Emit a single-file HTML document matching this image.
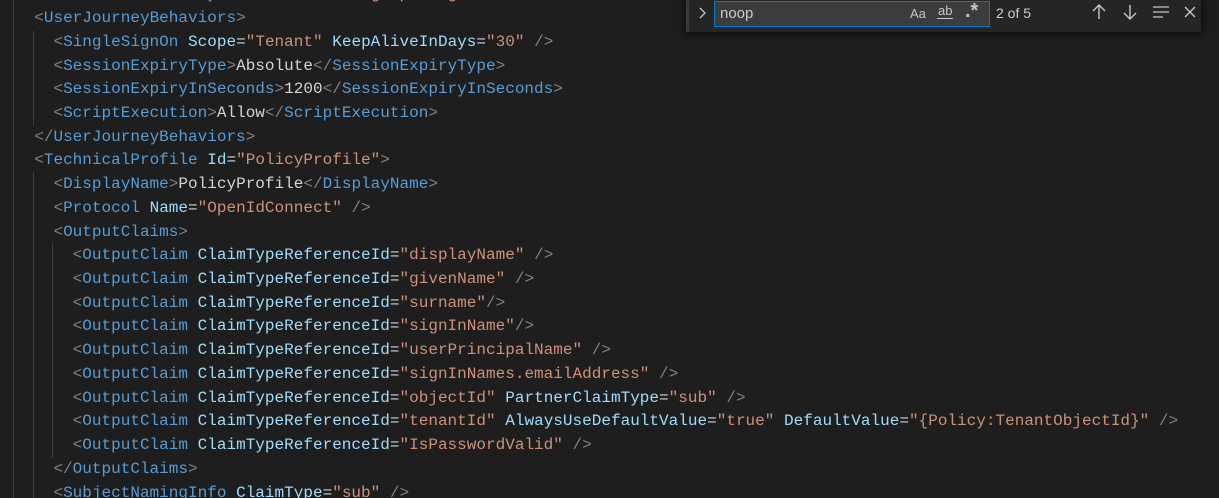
<!DOCTYPE html>
<html><head><meta charset="utf-8"><style>
html,body{margin:0;padding:0;background:#1e1e1e;width:1219px;height:498px;overflow:hidden;position:relative}
.code{position:absolute;left:15px;top:-16.6px;font-family:"Liberation Mono",monospace;font-size:16.03px;line-height:23.72px;white-space:pre;color:#d4d4d4}
.b{color:#808080}.t{color:#569cd6}.a{color:#9cdcfe}.s{color:#ce9178}
.g{position:absolute;width:1px;background:#404040}
.fw{position:absolute;left:686px;top:0;width:515px;height:32px;background:#252526;box-shadow:0 0 8px 2px rgba(0,0,0,.55);font-family:"Liberation Sans",sans-serif;color:#c5c5c5}
.fw .lb{position:absolute;left:0;top:0;width:3px;height:32px;background:#3a3a3a}
.inp{position:absolute;left:28px;top:1px;width:274px;height:24px;border:1px solid #007acc;background:#3c3c3c}
.ic{position:absolute;font-size:14px;top:6px}
</style></head><body>
<div class="g" style="left:13px;top:0;height:498px"></div>
<div class="g" style="left:33px;top:31px;height:94px"></div>
<div class="g" style="left:33px;top:172px;height:326px"></div>
<div class="g" style="left:52px;top:243px;height:215px"></div>
<div class="code"><span class="b">  &lt;</span><span class="t">DefaultUserJourney</span> <span class="a">ReferenceId</span>=<span class="s">"SignUpOrSignIn"</span> <span class="b">/&gt;</span>
<span class="b">  &lt;</span><span class="t">UserJourneyBehaviors</span><span class="b">&gt;</span>
<span class="b">    &lt;</span><span class="t">SingleSignOn</span> <span class="a">Scope</span>=<span class="s">"Tenant"</span> <span class="a">KeepAliveInDays</span>=<span class="s">"30"</span> <span class="b">/&gt;</span>
<span class="b">    &lt;</span><span class="t">SessionExpiryType</span><span class="b">&gt;</span>Absolute<span class="b">&lt;/</span><span class="t">SessionExpiryType</span><span class="b">&gt;</span>
<span class="b">    &lt;</span><span class="t">SessionExpiryInSeconds</span><span class="b">&gt;</span>1200<span class="b">&lt;/</span><span class="t">SessionExpiryInSeconds</span><span class="b">&gt;</span>
<span class="b">    &lt;</span><span class="t">ScriptExecution</span><span class="b">&gt;</span>Allow<span class="b">&lt;/</span><span class="t">ScriptExecution</span><span class="b">&gt;</span>
<span class="b">  &lt;/</span><span class="t">UserJourneyBehaviors</span><span class="b">&gt;</span>
<span class="b">  &lt;</span><span class="t">TechnicalProfile</span> <span class="a">Id</span>=<span class="s">"PolicyProfile"</span><span class="b">&gt;</span>
<span class="b">    &lt;</span><span class="t">DisplayName</span><span class="b">&gt;</span>PolicyProfile<span class="b">&lt;/</span><span class="t">DisplayName</span><span class="b">&gt;</span>
<span class="b">    &lt;</span><span class="t">Protocol</span> <span class="a">Name</span>=<span class="s">"OpenIdConnect"</span> <span class="b">/&gt;</span>
<span class="b">    &lt;</span><span class="t">OutputClaims</span><span class="b">&gt;</span>
<span class="b">      &lt;</span><span class="t">OutputClaim</span> <span class="a">ClaimTypeReferenceId</span>=<span class="s">"displayName"</span> <span class="b">/&gt;</span>
<span class="b">      &lt;</span><span class="t">OutputClaim</span> <span class="a">ClaimTypeReferenceId</span>=<span class="s">"givenName"</span> <span class="b">/&gt;</span>
<span class="b">      &lt;</span><span class="t">OutputClaim</span> <span class="a">ClaimTypeReferenceId</span>=<span class="s">"surname"</span><span class="b">/&gt;</span>
<span class="b">      &lt;</span><span class="t">OutputClaim</span> <span class="a">ClaimTypeReferenceId</span>=<span class="s">"signInName"</span><span class="b">/&gt;</span>
<span class="b">      &lt;</span><span class="t">OutputClaim</span> <span class="a">ClaimTypeReferenceId</span>=<span class="s">"userPrincipalName"</span> <span class="b">/&gt;</span>
<span class="b">      &lt;</span><span class="t">OutputClaim</span> <span class="a">ClaimTypeReferenceId</span>=<span class="s">"signInNames.emailAddress"</span> <span class="b">/&gt;</span>
<span class="b">      &lt;</span><span class="t">OutputClaim</span> <span class="a">ClaimTypeReferenceId</span>=<span class="s">"objectId"</span> <span class="a">PartnerClaimType</span>=<span class="s">"sub"</span> <span class="b">/&gt;</span>
<span class="b">      &lt;</span><span class="t">OutputClaim</span> <span class="a">ClaimTypeReferenceId</span>=<span class="s">"tenantId"</span> <span class="a">AlwaysUseDefaultValue</span>=<span class="s">"true"</span> <span class="a">DefaultValue</span>=<span class="s">"{Policy:TenantObjectId}"</span> <span class="b">/&gt;</span>
<span class="b">      &lt;</span><span class="t">OutputClaim</span> <span class="a">ClaimTypeReferenceId</span>=<span class="s">"IsPasswordValid"</span> <span class="b">/&gt;</span>
<span class="b">    &lt;/</span><span class="t">OutputClaims</span><span class="b">&gt;</span>
<span class="b">    &lt;</span><span class="t">SubjectNamingInfo</span> <span class="a">ClaimType</span>=<span class="s">"sub"</span> <span class="b">/&gt;</span></div>
<div class="fw">
  <div class="lb"></div>
  <svg style="position:absolute;left:11px;top:6px" width="12" height="14" viewBox="0 0 12 14"><path d="M3 2 L8 7 L3 12" fill="none" stroke="#c5c5c5" stroke-width="1.3"/></svg>
  <div class="inp"><span style="position:absolute;left:5px;top:3px;font-size:15px;color:#cccccc">noop</span>
    <span class="ic" style="left:195px;top:4px;font-size:13px">Aa</span>
    <span class="ic" style="left:222px;top:2px;font-size:13px;border-bottom:1px solid #c5c5c5;line-height:14px;padding:0 1px">ab</span>
    <span class="ic" style="left:250px;top:-2px;font-size:20px;font-weight:bold">.*</span>
  </div>
  <span style="position:absolute;left:310px;top:5px;font-size:14px;color:#cccccc">2 of 5</span>
  <svg style="position:absolute;left:405px;top:3px" width="16" height="18" viewBox="0 0 16 18"><path d="M8 16 V2 M2 8 L8 2 L14 8" fill="none" stroke="#c5c5c5" stroke-width="1.4"/></svg>
  <svg style="position:absolute;left:436px;top:3px" width="16" height="18" viewBox="0 0 16 18"><path d="M8 2 V16 M2 10 L8 16 L14 10" fill="none" stroke="#c5c5c5" stroke-width="1.4"/></svg>
  <svg style="position:absolute;left:466px;top:4px" width="18" height="16" viewBox="0 0 18 16"><path d="M1 3 H17 M1 8 H17 M1 13 H11" fill="none" stroke="#c5c5c5" stroke-width="1.3"/></svg>
  <svg style="position:absolute;left:497px;top:5px" width="14" height="14" viewBox="0 0 14 14"><path d="M2 2 L12 12 M12 2 L2 12" fill="none" stroke="#c5c5c5" stroke-width="1.4"/></svg>
</div>
</body></html>
